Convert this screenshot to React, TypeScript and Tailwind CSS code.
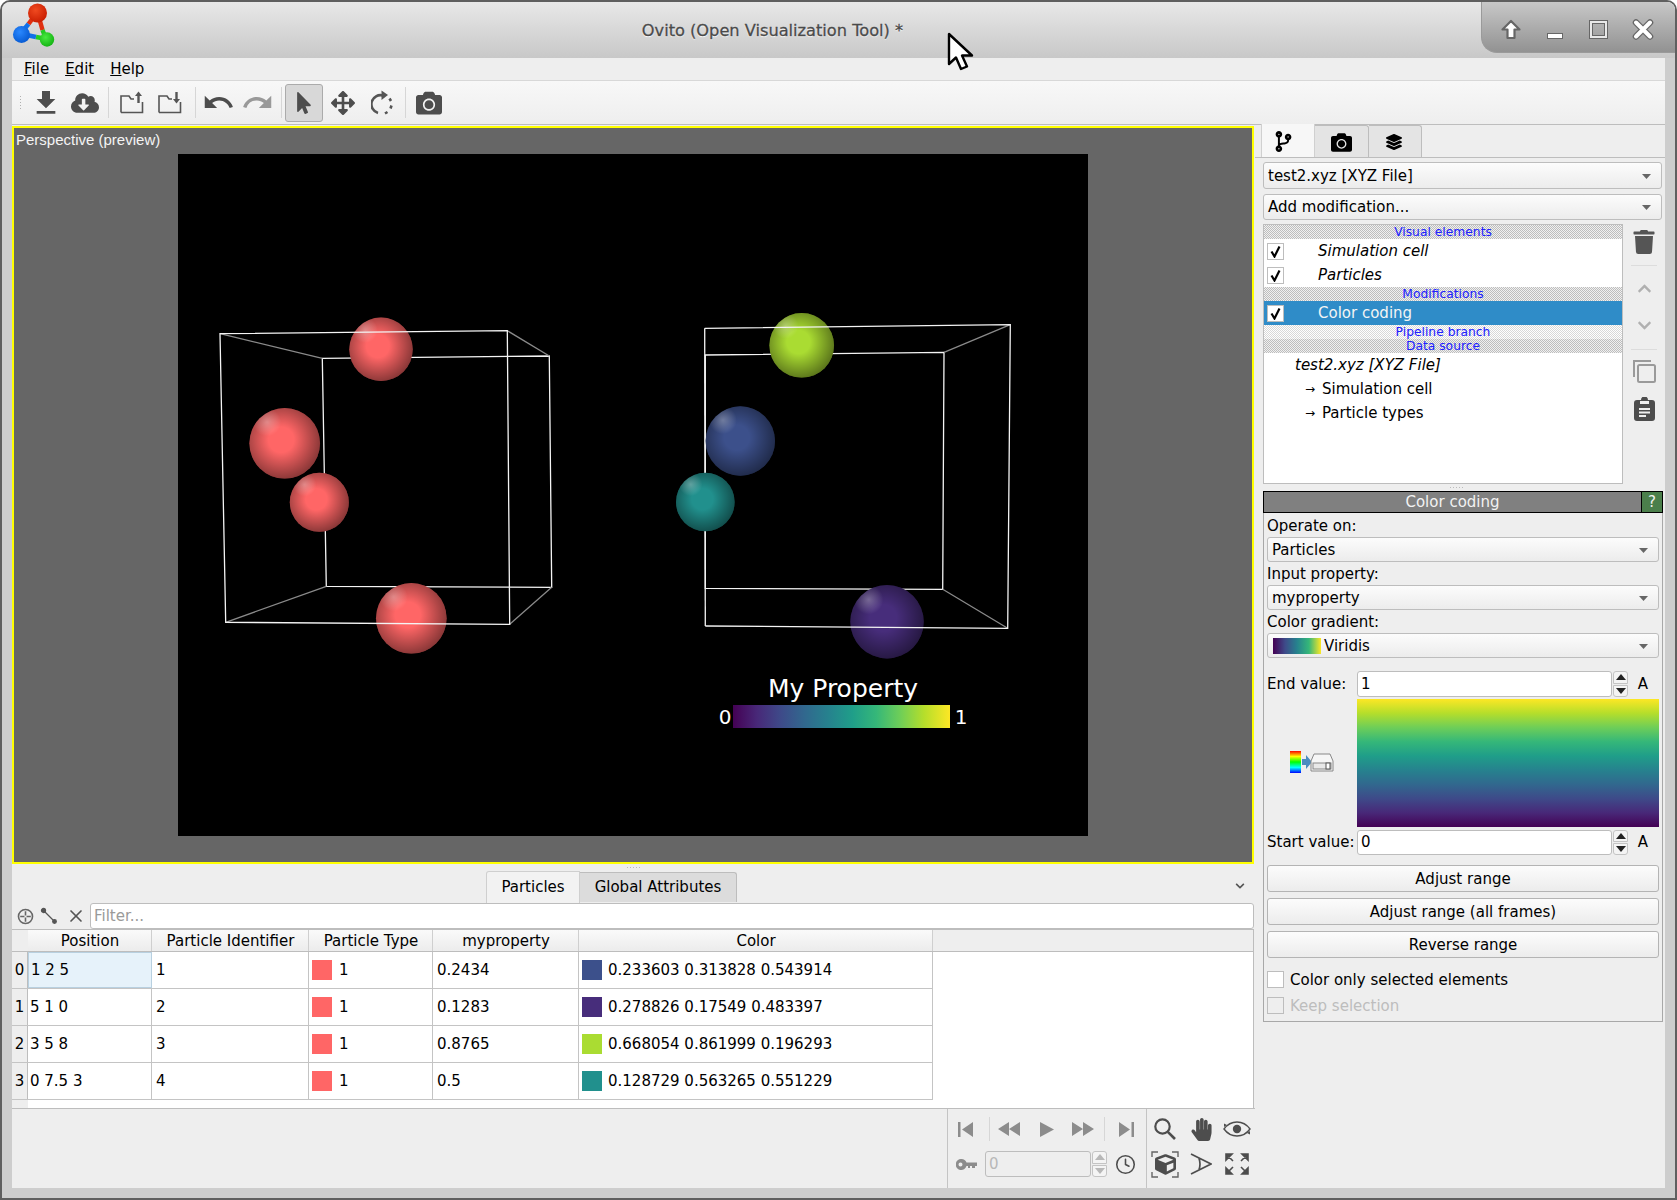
import { ReactNode } from "react";
import {
  FaArrowsAlt,
  FaCamera,
  FaChevronDown,
  FaChevronUp,
  FaCloudDownloadAlt,
  FaCodeBranch,
  FaCube,
  FaHandPaper,
  FaLayerGroup,
  FaMousePointer,
  FaTrash,
} from "react-icons/fa";
import { MdFileDownload, MdRedo, MdUndo } from "react-icons/md";
import { Clock, X } from "lucide-react";

const viridis =
  "#440154, #482878, #3e4a89, #31688e, #26828e, #1f9e89, #35b779, #6ece58, #b5de2b, #fde725";

const rows = [
  { id: "0", pos: "1 2 5", ident: "1", prop: "0.2434", swatch: "#3c508b", color: "0.233603 0.313828 0.543914" },
  { id: "1", pos: "5 1 0", ident: "2", prop: "0.1283", swatch: "#472d7b", color: "0.278826 0.17549 0.483397" },
  { id: "2", pos: "3 5 8", ident: "3", prop: "0.8765", swatch: "#aadc32", color: "0.668054 0.861999 0.196293" },
  { id: "3", pos: "0 7.5 3", ident: "4", prop: "0.5", swatch: "#21908d", color: "0.128729 0.563265 0.551229" },
];

function Arrow() {
  return (
    <svg width="9" height="5" viewBox="0 0 9 5" className="shrink-0">
      <path d="M0 0H9L4.5 5Z" fill="#666" />
    </svg>
  );
}

function Combo({ h, children }: { h: string; children: ReactNode }) {
  return (
    <div
      className={`flex ${h} items-center justify-between rounded-[3px] border border-[#bdbdbd] bg-gradient-to-b from-[#fcfcfc] to-[#ececec] pl-[4px] pr-[10px] pt-px`}
    >
      <div className="flex items-center">{children}</div>
      <Arrow />
    </div>
  );
}

function Sep({ className }: { className: string }) {
  return <div className={`h-[31px] w-px bg-[#d6d6d6] ${className}`} />;
}

function Tool({ w, children }: { w: string; children: ReactNode }) {
  return <div className={`flex ${w} items-center justify-center text-[#4d4d4d]`}>{children}</div>;
}

function FolderIcon({ up }: { up: boolean }) {
  return (
    <svg width="24" height="23" viewBox="0 0 24 23" fill="none" stroke="#555" strokeWidth="1.6">
      <path d="M1 21.5V5H9L11 8H14M22.5 11V21.5H1" />
      <path d={up ? "M18.5 12V3" : "M18.5 1V10"} strokeWidth="2.4" />
      <path d={up ? "M15 5L18.5 0.5L22 5Z" : "M15 8L18.5 12.5L22 8Z"} fill="#555" stroke="none" />
    </svg>
  );
}

function RotateIcon() {
  return (
    <svg width="22" height="26" viewBox="0 0 22 26" fill="none" stroke="#555" strokeWidth="2.6">
      <path d="M12 5.5A9 9 0 0 0 7 23" />
      <path d="M14 23.5L16.5 22M19.5 18.5L20.5 15.5M20 11L18.5 8.5" />
      <path d="M10.5 0.5L17 5L10.5 10Z" fill="#555" stroke="none" />
    </svg>
  );
}

function CheckBox({ on, muted }: { on?: boolean; muted?: boolean }) {
  return (
    <span
      className={`flex h-[17px] w-[17px] shrink-0 items-center justify-center border border-[#bdbdbd] ${muted ? "bg-[#eeeeee]" : "bg-white"}`}
    >
      {on && (
        <svg width="13" height="13" viewBox="0 0 13 13" fill="none" stroke="#000" strokeWidth="2.2">
          <path d="M2.5 6.5L5.5 11.5L10.5 1.5" />
        </svg>
      )}
    </span>
  );
}

function Section({ label, light }: { label: string; light?: boolean }) {
  return (
    <div
      className={`flex h-[14px] items-center justify-center bg-[length:2px_2px] text-[12.3px] leading-none text-[#2020ff] ${
        light
          ? "bg-[repeating-conic-gradient(#d8d8d8_0_25%,#ffffff_0_50%)]"
          : "bg-[repeating-conic-gradient(#bdbdbd_0_25%,#f0f0f0_0_50%)]"
      }`}
    >
      {label}
    </div>
  );
}

function ListRow({ label, selected }: { label: string; selected?: boolean }) {
  return (
    <div className={`flex h-[24px] items-center pl-[3px] ${selected ? "bg-[#2f8cc8] text-[#f4f4f4]" : "italic"}`}>
      <CheckBox on />
      <span className="ml-[34px]">{label}</span>
    </div>
  );
}

function Spinner({ muted }: { muted?: boolean }) {
  const fill = muted ? "#b8b8b8" : "#222";
  return (
    <div className="flex h-full w-[15px] flex-col gap-px">
      <div className="flex flex-1 items-center justify-center rounded-t-[3px] border border-[#c4c4c4] bg-[#f4f4f4]">
        <svg width="10" height="6" viewBox="0 0 10 6">
          <path d="M0 6H10L5 0Z" fill={fill} />
        </svg>
      </div>
      <div className="flex flex-1 items-center justify-center rounded-b-[3px] border border-[#c4c4c4] bg-[#f4f4f4]">
        <svg width="10" height="6" viewBox="0 0 10 6">
          <path d="M0 0H10L5 6Z" fill={fill} />
        </svg>
      </div>
    </div>
  );
}

function ValueRow({ label, value, h }: { label: string; value: string; h: string }) {
  return (
    <div className={`flex ${h} items-center`}>
      <span className="w-[90px] shrink-0">{label}</span>
      <div className="flex h-full w-[255px] items-center rounded-[3px] border border-[#bdbdbd] bg-white pl-[3px]">
        {value}
      </div>
      <div className="ml-px h-full">
        <Spinner />
      </div>
      <span className="w-[30px] text-center">A</span>
    </div>
  );
}

function RangeButton({ label, className }: { label: string; className: string }) {
  return (
    <div
      className={`flex h-[27px] items-center justify-center rounded-[3px] border border-[#b4b4b4] bg-gradient-to-b from-[#fcfcfc] to-[#ececec] pt-px ${className}`}
    >
      {label}
    </div>
  );
}

function Sphere({ x, y, r, fill }: { x: number; y: number; r: number; fill: string }) {
  return (
    <g stroke="none">
      <circle cx={x} cy={y} r={r} fill={fill} />
      <circle cx={x} cy={y} r={r} fill="url(#shade)" />
      <circle cx={x} cy={y} r={r} fill="url(#shine)" />
    </g>
  );
}

function Scene() {
  return (
    <svg width="910" height="682" viewBox="178 154 910 682" fill="none" stroke="#f4f4f4" strokeWidth="1.3">
      <defs>
        <radialGradient id="shade" cx="0.45" cy="0.45" r="0.6">
          <stop offset="0.3" stopColor="#000" stopOpacity="0" />
          <stop offset="1" stopColor="#000" stopOpacity="0.5" />
        </radialGradient>
        <radialGradient id="shine" cx="0.25" cy="0.2" r="0.2">
          <stop offset="0" stopColor="#fff" stopOpacity="0.3" />
          <stop offset="1" stopColor="#fff" stopOpacity="0" />
        </radialGradient>
        <linearGradient id="legend">
          <stop offset="0" stopColor="#440154" />
          <stop offset="0.11" stopColor="#482878" />
          <stop offset="0.22" stopColor="#3e4a89" />
          <stop offset="0.33" stopColor="#31688e" />
          <stop offset="0.44" stopColor="#26828e" />
          <stop offset="0.55" stopColor="#1f9e89" />
          <stop offset="0.66" stopColor="#35b779" />
          <stop offset="0.77" stopColor="#6ece58" />
          <stop offset="0.88" stopColor="#b5de2b" />
          <stop offset="1" stopColor="#fde725" />
        </linearGradient>
      </defs>

      {/* left cell, back edges */}
      <path d="M322.3 358.3L549.3 356L551.7 587.3L326.3 586.3Z" />
      <path d="M220 333.7L322.3 358.3M507.3 330.7L549.3 356M509.7 624.3L551.7 587.3M225.7 622.3L326.3 586.3" stroke="#8a8a8a" />
      <Sphere x={381} y={349.3} r={31.7} fill="#ff6666" />
      <Sphere x={284.7} y={443.3} r={35.3} fill="#ff6666" />
      <Sphere x={319.3} y={502.3} r={29.5} fill="#ff6666" />
      <Sphere x={411.3} y={618.3} r={35.3} fill="#ff6666" />
      <path d="M220 333.7L507.3 330.7L509.7 624.3L225.7 622.3Z" />

      {/* right cell */}
      <path d="M705.3 355L944 352.3L942.7 589.3L705.3 588.3Z" />
      <path d="M704.7 328.3L705.3 626" />
      <path d="M1010.3 324.7L944 352.3M1007.7 628.3L942.7 589.3" stroke="#8a8a8a" />
      <Sphere x={801.7} y={345.3} r={32.3} fill="#aadc32" />
      <Sphere x={740.3} y={441} r={34.7} fill="#3c508b" />
      <Sphere x={705.3} y={502} r={29.3} fill="#21908d" />
      <Sphere x={887} y={621.7} r={36.7} fill="#472d7b" />
      <path d="M704.7 328.3L1010.3 324.7L1007.7 628.3L705.3 626" />

      {/* legend */}
      <text x="843" y="697" textAnchor="middle" fontSize="25" fill="#ffffff" stroke="none">
        My Property
      </text>
      <rect x="733" y="705" width="217" height="23" fill="url(#legend)" stroke="none" />
      <text x="725" y="724" textAnchor="middle" fontSize="20" fill="#ffffff" stroke="none">
        0
      </text>
      <text x="961" y="724" textAnchor="middle" fontSize="20" fill="#ffffff" stroke="none">
        1
      </text>
    </svg>
  );
}

function Logo() {
  return (
    <svg width="44" height="50" viewBox="12 6 44 50" fill="none" strokeWidth="4.5">
      <defs>
        <radialGradient id="logoRed" cx="0.4" cy="0.35" r="0.7">
          <stop offset="0" stopColor="#f04a20" />
          <stop offset="1" stopColor="#c81c00" />
        </radialGradient>
        <radialGradient id="logoBlue" cx="0.4" cy="0.35" r="0.7">
          <stop offset="0" stopColor="#2a88ff" />
          <stop offset="1" stopColor="#0558d0" />
        </radialGradient>
        <radialGradient id="logoGreen" cx="0.4" cy="0.35" r="0.7">
          <stop offset="0" stopColor="#48ea40" />
          <stop offset="1" stopColor="#12b012" />
        </radialGradient>
      </defs>
      <path d="M36 18L28.5 28" stroke="#e03010" />
      <path d="M28.5 28L21 37" stroke="#1070e8" />
      <path d="M38 18L42.5 34" stroke="#e03010" />
      <path d="M42.5 34L46 43" stroke="#22cc22" />
      <path d="M22 38L36 41" stroke="#1070e8" />
      <path d="M36 41L47 43" stroke="#22cc22" />
      <circle cx="37.5" cy="17" r="9.5" fill="url(#logoRed)" />
      <circle cx="21.5" cy="38.5" r="8.5" fill="url(#logoBlue)" />
      <circle cx="47" cy="43.5" r="7.2" fill="url(#logoGreen)" />
    </svg>
  );
}

function WindowButtons() {
  return (
    <div className="flex h-[51px] w-[194px] items-center rounded-bl-[16px] border-b border-l border-[#9a9a9a] bg-gradient-to-b from-[#c8c8c8] to-[#929292] pb-[4px]">
      <svg width="193" height="30" viewBox="0 0 193 30" fill="none">
        <path
          d="M29 11L20.5 19.5H25.5V28H32.5V19.5H37.5Z"
          fill="#fff"
          stroke="#666"
          strokeWidth="2.2"
          strokeLinejoin="round"
        />
        <rect x="65.5" y="23.5" width="15" height="5" fill="#fff" stroke="#666" />
        <rect x="109" y="12" width="15" height="15" stroke="#666" strokeWidth="4" />
        <rect x="109" y="12" width="15" height="15" stroke="#e8e8e8" strokeWidth="2" />
        <path d="M154 12.5L168 26.5M168 12.5L154 26.5" stroke="#666" strokeWidth="6.5" strokeLinecap="round" />
        <path d="M154 12.5L168 26.5M168 12.5L154 26.5" stroke="#fff" strokeWidth="4" strokeLinecap="round" />
      </svg>
    </div>
  );
}

function ColorMapIcon() {
  return (
    <svg width="44" height="24" viewBox="0 0 44 24">
      <defs>
        <linearGradient id="rainbow" x1="0" y1="0" x2="0" y2="1">
          <stop offset="0" stopColor="#ff0000" />
          <stop offset="0.25" stopColor="#ffff00" />
          <stop offset="0.5" stopColor="#00ff00" />
          <stop offset="0.75" stopColor="#00ffff" />
          <stop offset="1" stopColor="#0000ff" />
        </linearGradient>
      </defs>
      <rect x="0" y="1" width="11" height="22" fill="url(#rainbow)" />
      <path d="M12 9H16V5L22 12L16 19V15H12Z" fill="#4a8cc0" />
      <path d="M24 4H40L43 11V21H21V11Z" fill="#f6f6f6" stroke="#888" />
      <rect x="23" y="13" width="18" height="6" fill="#e8e8e8" stroke="#888" />
      <rect x="36" y="13" width="4" height="6" fill="#fff" stroke="#555" />
    </svg>
  );
}

function ClipboardIcon() {
  return (
    <svg width="21" height="24" viewBox="0 0 21 24">
      <path
        d="M3 3H7A3.5 3.5 0 0 1 14 3H18A3 3 0 0 1 21 6V21A3 3 0 0 1 18 24H3A3 3 0 0 1 0 21V6A3 3 0 0 1 3 3Z"
        fill="#4d4d4d"
      />
      <rect x="6" y="4" width="9" height="3" fill="#eeeeee" />
      <path d="M5 12H16M5 15.5H16M5 19H12" stroke="#eeeeee" strokeWidth="1.8" />
    </svg>
  );
}

function Crosshair() {
  return (
    <svg width="17" height="17" viewBox="0 0 16 16" fill="none" stroke="#666" strokeWidth="1.5">
      <circle cx="8" cy="8" r="6.6" />
      <path d="M8 3V7M8 9V13M3 8H7M9 8H13" />
    </svg>
  );
}

function BondIcon() {
  return (
    <svg width="18" height="18" viewBox="0 0 18 18" stroke="#555" strokeWidth="1.3">
      <path d="M3 3L15 15" />
      <circle cx="3.5" cy="3.5" r="2" fill="#555" />
      <circle cx="14.5" cy="14.5" r="1.8" fill="#555" />
    </svg>
  );
}

function SkipIcon({ back }: { back: boolean }) {
  return (
    <svg width="16" height="15" viewBox="0 0 16 15" fill="#8c8c8c">
      <path d={back ? "M0 0H2.5V15H0ZM15 0V15L4 7.5Z" : "M16 0H13.5V15H16ZM1 0V15L12 7.5Z"} />
    </svg>
  );
}

function DoubleIcon({ back }: { back: boolean }) {
  return (
    <svg width="22" height="14" viewBox="0 0 22 14" fill="#8c8c8c">
      <path d={back ? "M11 0V14L0 7ZM22 0V14L11 7Z" : "M0 0V14L11 7ZM11 0V14L22 7Z"} />
    </svg>
  );
}

function KeyIcon() {
  return (
    <svg width="21" height="11" viewBox="0 0 21 11">
      <path
        d="M5.5 0A5.5 5.5 0 0 1 10.5 3.5H21V7H19V9H16V7H14V9H12V7H10.5A5.5 5.5 0 1 1 5.5 0ZM4.5 3.5A2 2 0 1 0 4.5 7.5A2 2 0 1 0 4.5 3.5Z"
        fill="#8c8c8c"
        fillRule="evenodd"
      />
    </svg>
  );
}

function SearchIcon() {
  return (
    <svg width="22" height="22" viewBox="0 0 22 22" fill="none" stroke="#4d4d4d" strokeWidth="2.2">
      <circle cx="8.5" cy="8.5" r="7.2" />
      <path d="M13.8 13.8L21 21" strokeWidth="2.6" />
    </svg>
  );
}

function EyeOrbit() {
  return (
    <svg width="28" height="18" viewBox="0 0 28 18" fill="none" stroke="#4d4d4d" strokeWidth="1.4">
      <path d="M1 9C5 3.5 10 2 14 2S23 3.5 27 9C23 14.5 18 16 14 16S5 14.5 1 9Z" />
      <circle cx="14" cy="9" r="4.2" fill="#4d4d4d" stroke="none" />
      <path d="M4 5L1 3.5V7ZM24 13L27 14.5V11Z" fill="#4d4d4d" stroke="none" />
    </svg>
  );
}

function CubeFrame() {
  return (
    <div className="relative flex h-[27px] w-[28px] items-center justify-center text-[#4d4d4d]">
      <FaCube size={21} />
      <svg width="28" height="27" viewBox="0 0 28 27" fill="none" stroke="#666" strokeWidth="1.4" className="absolute left-0 top-0">
        <path d="M1 6V1H7M21 1H27V6M27 21V26H21M7 26H1V21" />
      </svg>
    </div>
  );
}

function FovIcon() {
  return (
    <svg width="22" height="24" viewBox="0 0 22 24" fill="none" stroke="#4d4d4d" strokeWidth="1.7">
      <path d="M1 2L21 12L1 22M9 6.5Q11 12 9 17.5" />
    </svg>
  );
}

function ExpandIcon() {
  return (
    <svg width="24" height="22" viewBox="0 0 24 22" fill="#4d4d4d" stroke="#4d4d4d" strokeWidth="2">
      <path d="M1 1H7L1 7ZM3 3L8 8" strokeWidth="1.6" />
      <path d="M23 1H17L23 7ZM21 3L16 8" strokeWidth="1.6" />
      <path d="M1 21H7L1 15ZM3 19L8 14" strokeWidth="1.6" />
      <path d="M23 21H17L23 15ZM21 19L16 14" strokeWidth="1.6" />
    </svg>
  );
}

function DataTable() {
  return (
    <div className="h-[179px] w-[1242px] border-r border-t border-[#bdbdbd] bg-white">
      <div className="flex h-[22px] border-b border-[#bdbdbd] bg-[#eeeeee]">
        <div className="w-[16px]" />
        {[
          { t: "Position", w: "w-[124px]" },
          { t: "Particle Identifier", w: "w-[157px]" },
          { t: "Particle Type", w: "w-[124px]" },
          { t: "myproperty", w: "w-[146px]" },
          { t: "Color", w: "w-[354px]" },
        ].map((c) => (
          <div
            key={c.t}
            className={`flex ${c.w} items-center justify-center border-r border-[#cfcfcf] bg-gradient-to-b from-[#fafafa] to-[#ececec] pl-px pt-px`}
          >
            {c.t}
          </div>
        ))}
      </div>
      {rows.map((r) => (
        <div key={r.id} className="flex h-[37px] w-[921px] border-b border-[#c4c4c4]">
          <div className="flex w-[16px] items-center justify-center border-r border-[#bdbdbd] bg-[#eeeeee]">{r.id}</div>
          <div
            className={`flex w-[124px] items-center border-r pl-[2px] ${
              r.id === "0" ? "border border-[#b8d0e0] bg-[#e6f2fa]" : "border-[#c4c4c4]"
            }`}
          >
            {r.pos}
          </div>
          <div className="flex w-[157px] items-center border-r border-[#c4c4c4] pl-[4px]">{r.ident}</div>
          <div className="flex w-[124px] items-center border-r border-[#c4c4c4] pl-[3px]">
            <span className="mr-[7px] h-[20px] w-[20px] bg-[#ff6666]" />1
          </div>
          <div className="flex w-[146px] items-center border-r border-[#c4c4c4] pl-[4px]">{r.prop}</div>
          <div className="flex w-[354px] items-center border-r border-[#c4c4c4] pl-[3px]">
            <span className="mr-[6px] h-[20px] w-[20px]" style={{ background: r.swatch }} />
            {r.color}
          </div>
        </div>
      ))}
      <div className="h-[8px] w-[16px] bg-[#eeeeee]" />
    </div>
  );
}

function AnimationBar() {
  return (
    <div className="flex h-[80px] justify-end border-t border-[#bdbdbd]">
      <div className="w-[199px] border-l border-[#c4c4c4] pt-[7px]">
        <div className="flex h-[26px] items-center">
          <span className="ml-[9px] flex w-[18px] justify-center"><SkipIcon back /></span>
          <span className="ml-[14px] h-[24px] w-px bg-[#d6d6d6]" />
          <span className="ml-[8px] flex w-[22px] justify-center"><DoubleIcon back /></span>
          <span className="ml-[16px] flex w-[22px] justify-center">
            <svg width="14" height="15" viewBox="0 0 14 15"><path d="M0 0L14 7.5L0 15Z" fill="#8c8c8c" /></svg>
          </span>
          <span className="ml-[14px] flex w-[22px] justify-center"><DoubleIcon back={false} /></span>
          <span className="ml-[10px] h-[24px] w-px bg-[#d6d6d6]" />
          <span className="ml-[12px] flex w-[18px] justify-center"><SkipIcon back={false} /></span>
        </div>
        <div className="mt-[9px] flex h-[26px] items-center">
          <span className="ml-[7px] flex w-[22px] justify-center"><KeyIcon /></span>
          <div className="ml-[8px] flex h-full w-[106px] items-center rounded-[3px] border border-[#bdbdbd] pl-[3px] text-[#b8b8b8]">0</div>
          <div className="ml-px h-full"><Spinner muted /></div>
          <span className="ml-[8px] flex w-[21px] justify-center"><Clock size={21} color="#4d4d4d" strokeWidth={1.8} /></span>
        </div>
      </div>
      <div className="w-[109px] border-l border-[#c4c4c4] pt-[7px]">
        <div className="flex h-[26px] items-center">
          <span className="flex w-[36px] justify-center"><SearchIcon /></span>
          <span className="flex w-[36px] justify-center"><FaHandPaper size={23} color="#4d4d4d" /></span>
          <span className="flex w-[36px] justify-center"><EyeOrbit /></span>
        </div>
        <div className="mt-[9px] flex h-[26px] items-center">
          <span className="flex w-[36px] justify-center"><CubeFrame /></span>
          <span className="flex w-[36px] justify-center"><FovIcon /></span>
          <span className="flex w-[36px] justify-center"><ExpandIcon /></span>
        </div>
      </div>
    </div>
  );
}

function SidePanel() {
  return (
    <div className="w-[410px]">
      <div className="flex h-[33px] items-end border-b border-[#bdbdbd] pl-[6px]">
        <div className="flex h-[33px] w-[54px] items-center justify-center border-x border-[#d0d0d0] bg-[#f7f7f7] pr-[9px] pt-px text-black">
          <FaCodeBranch size={21} />
        </div>
        <div className="flex h-[32px] w-[54px] items-center justify-center rounded-tr-[3px] border-r border-t border-[#bdbdbd] bg-[#e4e4e4] pr-px pt-px text-black">
          <FaCamera size={21} />
        </div>
        <div className="flex h-[32px] w-[53px] items-center justify-center rounded-tr-[3px] border-r border-t border-[#bdbdbd] bg-[#e4e4e4] pr-[2px] pt-px text-black">
          <FaLayerGroup size={16} />
        </div>
      </div>

      <div className="ml-[8px] w-[400px]">
        <div className="mt-[4px] w-[399px]">
          <Combo h="h-[27px]">test2.xyz [XYZ File]</Combo>
          <div className="mt-[5px]">
            <Combo h="h-[26px]">Add modification...</Combo>
          </div>
        </div>

        <div className="mt-[4px] flex">
          <div className="h-[260px] w-[360px] shrink-0 border border-[#bdbdbd] bg-white">
            <Section label="Visual elements" />
            <ListRow label="Simulation cell" />
            <ListRow label="Particles" />
            <Section label="Modifications" />
            <ListRow label="Color coding" selected />
            <Section label="Pipeline branch" light />
            <Section label="Data source" />
            <div className="flex h-[24px] items-center pl-[31px] italic">test2.xyz [XYZ File]</div>
            <div className="flex h-[24px] items-center pl-[41px]">
              <span className="w-[17px] text-[12px]">→</span>Simulation cell
            </div>
            <div className="flex h-[24px] items-center pl-[41px]">
              <span className="w-[17px] text-[12px]">→</span>Particle types
            </div>
          </div>
          <div className="flex w-[42px] shrink-0 flex-col items-center pt-[6px]">
            <FaTrash size={24} color="#555" />
            <div className="mt-[11px] h-px w-[26px] bg-[#dcdcdc]" />
            <FaChevronUp size={15} color="#b0b0b0" className="mt-[15px]" />
            <FaChevronDown size={15} color="#b0b0b0" className="mt-[22px]" />
            <div className="mt-[16px] h-px w-[26px] bg-[#dcdcdc]" />
            <svg width="23" height="23" viewBox="0 0 23 23" fill="none" stroke="#9a9a9a" strokeWidth="2" className="mt-[10px]">
              <path d="M1 17V1H18" />
              <rect x="5" y="5" width="17" height="17" rx="1.5" />
            </svg>
            <div className="mt-[14px]">
              <ClipboardIcon />
            </div>
          </div>
        </div>

        <div className="flex h-[7px] items-center justify-center pr-[12px]">
          <div className="h-px w-[14px] bg-[repeating-linear-gradient(90deg,#bbb_0_1px,transparent_1px_3px)]" />
        </div>

        <div className="flex h-[22px] border border-black bg-[#808080] text-[#f2f2f2]">
          <div className="flex flex-1 items-center justify-center">Color coding</div>
          <div className="flex w-[21px] items-center justify-center border-l border-black bg-[#4b7f4b]">?</div>
        </div>

        <div className="border-x border-b border-[#a8a8a8] px-[3px] pb-[7px]">
          <div className="flex h-[24px] items-center pt-[2px]">Operate on:</div>
          <Combo h="h-[25px]">Particles</Combo>
          <div className="flex h-[23px] items-center pt-px">Input property:</div>
          <Combo h="h-[25px]">myproperty</Combo>
          <div className="flex h-[23px] items-center pt-px">Color gradient:</div>
          <Combo h="h-[25px]">
            <span className="ml-px mr-[3px] h-[16px] w-[48px] bg-[linear-gradient(90deg,#440154,#3e4a89,#26828e,#35b779,#fde725)]" />
            Viridis
          </Combo>

          <div className="mt-[13px]">
            <ValueRow label="End value:" value="1" h="h-[26px]" />
          </div>
          <div className="mt-[2px] flex h-[128px]">
            <div className="flex w-[90px] shrink-0 items-center pl-[23px] pb-[2px]">
              <ColorMapIcon />
            </div>
            <div
              className="w-[302px]"
              style={{ background: `linear-gradient(0deg, ${viridis})` }}
            />
          </div>
          <div className="mt-[3px]">
            <ValueRow label="Start value:" value="0" h="h-[25px]" />
          </div>

          <RangeButton label="Adjust range" className="mt-[10px]" />
          <RangeButton label="Adjust range (all frames)" className="mt-[6px]" />
          <RangeButton label="Reverse range" className="mt-[6px]" />

          <div className="mt-[13px] flex h-[17px] items-center">
            <CheckBox />
            <span className="ml-[6px] pt-px">Color only selected elements</span>
          </div>
          <div className="mt-[9px] flex h-[17px] items-center text-[#bdbdbd]">
            <CheckBox muted />
            <span className="ml-[6px] pt-px">Keep selection</span>
          </div>
        </div>
      </div>
    </div>
  );
}

export default function App() {
  return (
    <div className="relative h-[1200px] w-[1677px] overflow-hidden rounded-t-[10px] border-2 border-[#5f5f5f] bg-[#cdcdcd] font-['DejaVu_Sans',sans-serif] text-[15px] leading-tight text-black">
      {/* title bar */}
      <div className="flex h-[56px] bg-gradient-to-b from-[#e8e8e8] to-[#c8c8c8]">
        <div className="w-[62px] pl-[10px]">
          <Logo />
        </div>
        <div className="flex flex-1 items-center justify-center pt-[3px] text-[16.2px] text-[#4a4a4a] [-webkit-text-stroke:0.3px_#4a4a4a] [text-shadow:0_1px_1px_#fff]">
          Ovito (Open Visualization Tool) *
        </div>
        <WindowButtons />
      </div>

      {/* client area */}
      <div className="mx-[10px] flex h-[1130px] flex-col bg-[#eeeeee]">
        <div className="flex h-[23px] items-center gap-[16px] border-b border-[#d8d8d8] pl-[12px]">
          <span><span className="underline">F</span>ile</span>
          <span><span className="underline">E</span>dit</span>
          <span><span className="underline">H</span>elp</span>
        </div>

        <div className="flex h-[44px] items-center border-b border-[#bdbdbd] bg-gradient-to-b from-[#f8f8f8] to-[#eeeeee] pl-[7px]">
          <div className="mr-[3px] h-[16px] w-[3px] bg-[radial-gradient(#b0b0b0_40%,transparent_45%)] bg-[length:3px_3px]" />
          <Tool w="w-[42px]"><MdFileDownload size={32} /></Tool>
          <Tool w="w-[36px]"><FaCloudDownloadAlt size={28} /></Tool>
          <Sep className="mx-[5px]" />
          <Tool w="w-[36px]"><FolderIcon up /></Tool>
          <Tool w="w-[40px]"><FolderIcon up={false} /></Tool>
          <Sep className="mx-[5px]" />
          <Tool w="w-[34px]"><MdUndo size={33} /></Tool>
          <Tool w="w-[40px] ml-[2px]"><MdRedo size={33} color="#999" /></Tool>
          <Sep className="ml-[4px] mr-[3px]" />
          <div className="flex h-[38px] w-[38px] items-center justify-center rounded-[3px] border border-[#ababab] bg-[#d8d8d8] text-[#4d4d4d]">
            <FaMousePointer size={22} />
          </div>
          <Tool w="w-[40px]"><FaArrowsAlt size={24} /></Tool>
          <Tool w="w-[38px]"><RotateIcon /></Tool>
          <Sep className="ml-[4px] mr-[5px]" />
          <Tool w="w-[36px]"><FaCamera size={26} /></Tool>
        </div>

        <div className="flex flex-1">
          <div className="w-[1243px]">
            <div className="relative mt-px flex h-[738px] w-[1242px] items-center justify-center border-2 border-[#ffff00] bg-[#666666]">
              <span className="absolute left-[2px] top-[3px] font-['Liberation_Sans',sans-serif] text-[15px] text-[#f4f4f4]">
                Perspective (preview)
              </span>
              <div className="bg-black">
                <Scene />
              </div>
            </div>

            <div className="flex h-[7px] items-center justify-center">
              <div className="h-px w-[14px] bg-[repeating-linear-gradient(90deg,#bbb_0_1px,transparent_1px_3px)]" />
            </div>

            <div className="flex h-[32px] items-end pl-[474px]">
              <div className="flex h-[32px] w-[94px] items-center justify-center rounded-tl-[3px] border-x border-t border-[#cfcfcf] bg-[#f2f2f2]">
                Particles
              </div>
              <div className="mb-px flex h-[30px] w-[157px] items-center justify-center rounded-tr-[3px] border-r border-t border-[#bdbdbd] bg-[#dcdcdc]">
                Global Attributes
              </div>
              <FaChevronDown size={10} color="#555" className="mb-[12px] ml-[498px]" />
            </div>

            <div className="flex h-[26px] items-center">
              <div className="flex w-[23px] justify-center pl-[3px]"><Crosshair /></div>
              <div className="flex w-[26px] justify-center pl-px"><BondIcon /></div>
              <div className="flex w-[29px] justify-center"><X size={20} color="#555" strokeWidth={2} /></div>
              <div className="flex h-full w-[1164px] items-center rounded-[3px] border border-[#bdbdbd] bg-white pl-[3px] text-[#9a9a9a]">
                Filter...
              </div>
            </div>

            <DataTable />
            <AnimationBar />
          </div>

          <SidePanel />
        </div>
      </div>

      {/* mouse cursor on top of the screenshot */}
      <svg width="28" height="40" viewBox="0 0 28 40" className="absolute left-[945px] top-[30px]">
        <path
          d="M2 2V32L9 25.5L14 37L20 34.5L15 23.5H25Z"
          fill="#fff"
          stroke="#000"
          strokeWidth="2.4"
          strokeLinejoin="round"
        />
      </svg>
    </div>
  );
}
